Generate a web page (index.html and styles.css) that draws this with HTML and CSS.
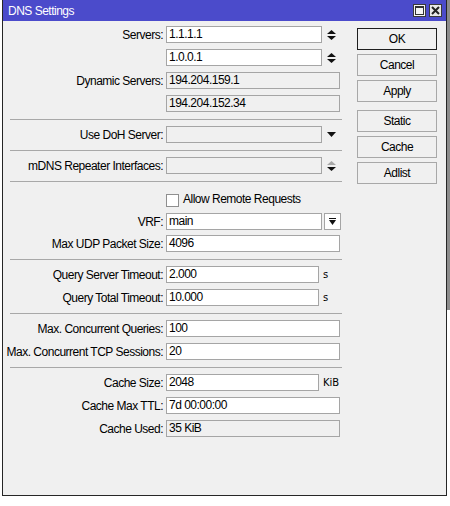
FILE: index.html
```html
<!DOCTYPE html>
<html>
<head>
<meta charset="UTF-8" />
<link rel="stylesheet" href="styles.css">
</head>
<body>
<div class="desk">
  <div class="edge-left"></div>
  <div class="win">
    <div class="titlebar">
      <span class="title">DNS Settings</span>
      <span class="tb-btns">
        <span class="tb-btn max"><svg width="9" height="9" viewBox="0 0 9 9"><rect x="0.5" y="0.5" width="8" height="8" fill="none" stroke="#333"/><rect x="0.5" y="0.5" width="8" height="1.5" fill="#333"/></svg></span>
        <span class="tb-btn"><svg width="9" height="9" viewBox="0 0 9 9"><path d="M1 1 L8 8 M8 1 L1 8" stroke="#222" stroke-width="2"/></svg></span>
      </span>
    </div>
    <div class="body">
      <div class="form">
        <div class="row">
          <span class="lbl">Servers:</span>
          <span class="inp w-mid">1.1.1.1</span>
          <span class="ico"><svg width="9" height="10" viewBox="0 0 9 10"><path d="M4.5 0 L9 4 L0 4 Z M0 6 L9 6 L4.5 10 Z" fill="#111"/></svg></span>
        </div>
        <div class="row">
          <span class="lbl"></span>
          <span class="inp w-mid">1.0.0.1</span>
          <span class="ico"><svg width="9" height="10" viewBox="0 0 9 10"><path d="M4.5 0 L9 4 L0 4 Z M0 6 L9 6 L4.5 10 Z" fill="#111"/></svg></span>
        </div>
        <div class="row">
          <span class="lbl">Dynamic Servers:</span>
          <span class="inp w-full grey">194.204.159.1</span>
        </div>
        <div class="row">
          <span class="lbl"></span>
          <span class="inp w-full grey">194.204.152.34</span>
        </div>
        <div class="sep"></div>
        <div class="row">
          <span class="lbl">Use DoH Server:</span>
          <span class="inp w-mid grey"></span>
          <span class="ico"><svg width="9" height="5" viewBox="0 0 9 5"><path d="M0 0 L9 0 L4.5 5 Z" fill="#111"/></svg></span>
        </div>
        <div class="sep"></div>
        <div class="row">
          <span class="lbl">mDNS Repeater Interfaces:</span>
          <span class="inp w-mid grey"></span>
          <span class="ico"><svg width="9" height="10" viewBox="0 0 9 10"><path d="M4.5 0 L9 4 L0 4 Z" fill="#a8a8a8"/><path d="M0 6 L9 6 L4.5 10 Z" fill="#111"/></svg></span>
        </div>
        <div class="sep"></div>
        <div class="row row-check">
          <span class="lbl"></span>
          <span class="check"></span>
          <span class="check-text">Allow Remote Requests</span>
        </div>
        <div class="row row-vrf">
          <span class="lbl">VRF:</span>
          <span class="inp w-mid">main</span>
          <span class="drop"><svg width="7" height="7" viewBox="0 0 7 7"><rect x="0" y="0" width="7" height="1" fill="#111"/><path d="M0 2 L7 2 L3.5 7 Z" fill="#111"/></svg></span>
        </div>
        <div class="row">
          <span class="lbl">Max UDP Packet Size:</span>
          <span class="inp w-full">4096</span>
        </div>
        <div class="sep"></div>
        <div class="row">
          <span class="lbl">Query Server Timeout:</span>
          <span class="inp w-unit">2.000</span>
          <span class="unit">s</span>
        </div>
        <div class="row">
          <span class="lbl">Query Total Timeout:</span>
          <span class="inp w-unit">10.000</span>
          <span class="unit">s</span>
        </div>
        <div class="sep"></div>
        <div class="row">
          <span class="lbl">Max. Concurrent Queries:</span>
          <span class="inp w-full">100</span>
        </div>
        <div class="row">
          <span class="lbl">Max. Concurrent TCP Sessions:</span>
          <span class="inp w-full">20</span>
        </div>
        <div class="sep"></div>
        <div class="row">
          <span class="lbl">Cache Size:</span>
          <span class="inp w-unit">2048</span>
          <span class="unit">KiB</span>
        </div>
        <div class="row">
          <span class="lbl">Cache Max TTL:</span>
          <span class="inp w-full">7d 00:00:00</span>
        </div>
        <div class="row">
          <span class="lbl">Cache Used:</span>
          <span class="inp w-full grey">35 KiB</span>
        </div>
      </div>
      <div class="side">
        <div class="btn default">OK</div>
        <div class="btn">Cancel</div>
        <div class="btn">Apply</div>
        <div class="btn spaced">Static</div>
        <div class="btn">Cache</div>
        <div class="btn">Adlist</div>
      </div>
    </div>
  </div>
  <div class="edge-right"></div>
</div>
</body>
</html>
```

FILE: styles.css
```css
@charset "utf-8";

body {
    margin: 0;
    background: #ffffff;
    font-family: "Liberation Sans", Arial, sans-serif;
    font-size: 12px;
    letter-spacing: -0.5px;
    color: #000000;
}

.desk {
    display: flex;
    height: 506px;
}

.edge-left {
    width: 2px;
    background: #ffffff;
}

.edge-right {
    width: 3px;
    height: 310px;
    background: #8c8c8c;
}

.win {
    width: 446px;
    height: 496px;
    box-sizing: border-box;
    border: 1px solid #262626;
    border-top: 0;
    background: #f0f0f0;
    display: flex;
    flex-direction: column;
}

.titlebar {
    height: 21px;
    flex: none;
    background: #4b4bcb;
    display: flex;
    align-items: center;
    padding: 0 4px 0 5px;
}

.title {
    color: #ffffff;
    font-size: 12px;
    flex: 1;
}

.tb-btns {
    display: flex;
    gap: 3px;
}

.tb-btn {
    width: 13px;
    height: 13px;
    box-sizing: border-box;
    border: 1px solid #3a3a3a;
    background: #e8e8e8;
    display: flex;
    align-items: center;
    justify-content: center;
}

.tb-btn.max {
    background: #f4f4f4;
}

.body {
    flex: 1;
    display: flex;
    padding-top: 5px;
}

.form {
    width: 339px;
    display: flex;
    flex-direction: column;
    gap: 6px;
}

.row {
    display: flex;
    align-items: center;
    height: 17px;
}

.row-check {
    height: 19px;
    align-items: flex-end;
}

.row-vrf {
    margin-bottom: -1px;
}

.lbl {
    width: 160px;
    flex: none;
    text-align: right;
    white-space: nowrap;
}

.inp {
    margin-left: 3px;
    height: 17px;
    box-sizing: border-box;
    border: 1px solid #a5a5a5;
    background: #ffffff;
    padding-left: 2px;
    line-height: 15px;
    flex: none;
}

.grey {
    background: #f0f0f0;
}

.w-full {
    width: 174px;
}

.w-mid {
    width: 156px;
}

.w-unit {
    width: 153px;
}

.ico {
    width: 18px;
    display: flex;
    justify-content: center;
}

.drop {
    margin-left: 2px;
    width: 17px;
    height: 17px;
    box-sizing: border-box;
    border: 1px solid #a5a5a5;
    background: #ffffff;
    display: flex;
    align-items: center;
    justify-content: center;
}

.unit {
    margin-left: 4px;
    font-family: "DejaVu Sans", sans-serif;
    font-size: 10px;
    letter-spacing: 0;
}

.check {
    margin-left: 3px;
    width: 13px;
    height: 13px;
    box-sizing: border-box;
    border: 1px solid #8f8f8f;
    background: #ffffff;
}

.check-text {
    margin-left: 4px;
    line-height: 15px;
}

.sep {
    height: 1px;
    background: #a8a8a8;
    margin: 1px 0 0 7px;
}

.side {
    margin-left: 15px;
    padding-top: 2px;
    display: flex;
    flex-direction: column;
    gap: 4px;
}

.btn {
    width: 80px;
    height: 22px;
    box-sizing: border-box;
    border: 1px solid #a8a8a8;
    background: #f0f0f0;
    display: flex;
    align-items: center;
    justify-content: center;
}

.btn.default {
    border-color: #1e1e1e;
}

.btn.spaced {
    margin-top: 4px;
}
```
